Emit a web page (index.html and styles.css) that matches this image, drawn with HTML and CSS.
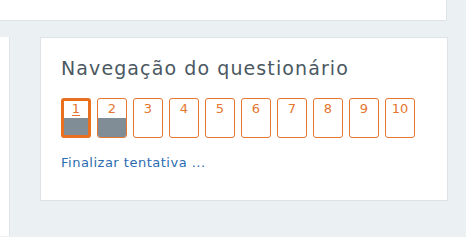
FILE: index.html
```html
<!DOCTYPE html>
<html>
<head>
<meta charset="utf-8">
<link rel="stylesheet" href="styles.css">
</head>
<body>
<div class="page">
  <div class="top-card"></div>
  <div class="row">
    <div class="left-card"></div>
    <div class="nav-card">
      <h3 class="title">Navegação do questionário</h3>
      <div class="buttons">
        <a class="qbtn current answered"><span class="num">1</span><span class="fill"></span></a>
        <a class="qbtn answered"><span class="num">2</span><span class="fill"></span></a>
        <a class="qbtn"><span class="num">3</span></a>
        <a class="qbtn"><span class="num">4</span></a>
        <a class="qbtn"><span class="num">5</span></a>
        <a class="qbtn"><span class="num">6</span></a>
        <a class="qbtn"><span class="num">7</span></a>
        <a class="qbtn"><span class="num">8</span></a>
        <a class="qbtn"><span class="num">9</span></a>
        <a class="qbtn"><span class="num">10</span></a>
      </div>
      <a class="finish">Finalizar tentativa ...</a>
    </div>
  </div>
</div>
</body>
</html>
```
FILE: styles.css
```css
html, body {
  margin: 0;
  padding: 0;
}
body {
  background: #ebf0f3;
  font-family: "DejaVu Sans", "Open Sans", sans-serif;
  width: 466px;
  height: 237px;
  overflow: hidden;
}
.page {
  display: flex;
  flex-direction: column;
  gap: 16px;
}
.top-card {
  width: 447px;
  height: 21px;
  background: #fff;
  border-bottom: 1px solid #dde3e7;
  border-right: 1px solid #dde3e7;
  box-sizing: border-box;
}
.row {
  display: flex;
  gap: 30px;
}
.left-card {
  width: 10px;
  height: 199px;
  background: #fff;
  border-right: 1px solid #dde3e7;
  box-sizing: border-box;
}
.nav-card {
  width: 408px;
  height: 164px;
  box-sizing: border-box;
  background: #fff;
  border: 1px solid #dde3e7;
  padding: 18px 20px 0 20px;
}
.title {
  margin: 0;
  font-size: 19px;
  font-weight: 400;
  color: #4b5862;
  line-height: 25px;
  letter-spacing: 1.1px;
}
.buttons {
  display: flex;
  gap: 6px;
  margin-top: 17px;
}
.qbtn {
  position: relative;
  width: 30px;
  height: 40px;
  box-sizing: border-box;
  border: 1px solid #e5762f;
  border-radius: 3px;
  display: flex;
  flex-direction: column;
  align-items: center;
  overflow: hidden;
  background: #fff;
}
.qbtn.current {
  border: 3px solid #e8701f;
}
.num {
  font-size: 13px;
  line-height: 18px;
  color: #e5762f;
  margin-top: 1px;
  height: 18px;
}
.qbtn.current .num {
  margin-top: -1px;
  text-decoration: underline;
  text-underline-offset: 2px;
}
.fill {
  flex: 1;
  align-self: stretch;
  background: #808d97;
}
.finish {
  display: block;
  margin-top: 17px;
  font-size: 13px;
  color: #2b6cb0;
  letter-spacing: 0.5px;
}
```
